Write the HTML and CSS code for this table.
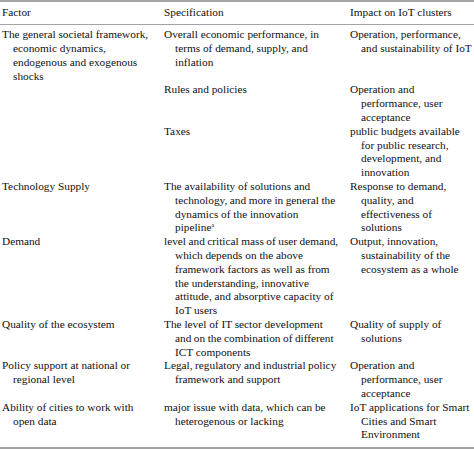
FILE: index.html
```html
<!DOCTYPE html>
<html>
<head>
<meta charset="utf-8">
<link rel="stylesheet" href="styles.css">
</head>
<body>
<table class="tbl">
  <colgroup>
    <col class="c1">
    <col class="c2">
    <col class="c3">
  </colgroup>
  <thead>
    <tr>
      <th>Factor</th>
      <th>Specification</th>
      <th>Impact on IoT clusters</th>
    </tr>
  </thead>
  <tbody>
    <tr class="first">
      <td>The general societal framework,<br>economic dynamics,<br>endogenous and exogenous<br>shocks</td>
      <td>Overall economic performance, in<br>terms of demand, supply, and<br>inflation</td>
      <td>Operation, performance,<br>and sustainability of IoT</td>
    </tr>
    <tr>
      <td></td>
      <td>Rules and policies</td>
      <td>Operation and<br>performance, user<br>acceptance</td>
    </tr>
    <tr>
      <td></td>
      <td>Taxes</td>
      <td>public budgets available<br>for public research,<br>development, and<br>innovation</td>
    </tr>
    <tr>
      <td>Technology Supply</td>
      <td>The availability of solutions and<br><span class="tight">technology, and more in general the</span><br>dynamics of the innovation<br>pipeline<sup class="note">a</sup></td>
      <td>Response to demand,<br>quality, and<br>effectiveness of<br>solutions</td>
    </tr>
    <tr>
      <td>Demand</td>
      <td><span class="tight">level and critical mass of user demand,</span><br>which depends on the above<br>framework factors as well as from<br>the understanding, innovative<br>attitude, and absorptive capacity of<br>IoT users</td>
      <td>Output, innovation,<br>sustainability of the<br>ecosystem as a whole</td>
    </tr>
    <tr>
      <td>Quality of the ecosystem</td>
      <td>The level of IT sector development<br><span class="tight">and on the combination of different</span><br>ICT components</td>
      <td>Quality of supply of<br>solutions</td>
    </tr>
    <tr>
      <td>Policy support at national or<br>regional level</td>
      <td><span class="tight">Legal, regulatory and industrial policy</span><br>framework and support</td>
      <td>Operation and<br>performance, user<br>acceptance</td>
    </tr>
    <tr class="last">
      <td>Ability of cities to work with<br>open data</td>
      <td>major issue with data, which can be<br>heterogenous or lacking</td>
      <td>IoT applications for Smart<br>Cities and Smart<br>Environment</td>
    </tr>
  </tbody>
</table>
</body>
</html>
```
FILE: styles.css
```css
html, body {
  margin: 0;
  padding: 0;
  background: #ffffff;
}
body {
  font-family: "Liberation Serif", "Times New Roman", serif;
  font-size: 11.3px;
  line-height: 13.8px;
  color: #111111;
}
.tbl {
  width: 474px;
  table-layout: fixed;
  border-collapse: separate;
  border-spacing: 0;
  border-top: 2.3px solid #a3a3a3;
  border-bottom: 2.3px solid #a3a3a3;
}
.c1 { width: 162px; }
.c2 { width: 186px; }
.c3 { width: 126px; }
.tbl th {
  font-weight: normal;
  text-align: left;
  vertical-align: top;
  padding: 4px 0 4px 2px;
  border-bottom: 1px solid #a3a3a3;
  white-space: nowrap;
}
.tbl td {
  vertical-align: top;
  padding: 0 0 0 13px;
  text-indent: -11px;
  white-space: nowrap;
}
.tbl tr.first td { padding-top: 3.5px; }
.tbl tr.last td { padding-bottom: 4.4px; }
.tight {
  word-spacing: -0.3px;
}
.note {
  font-size: 6px;
  line-height: 0;
  vertical-align: 4px;
}
```
